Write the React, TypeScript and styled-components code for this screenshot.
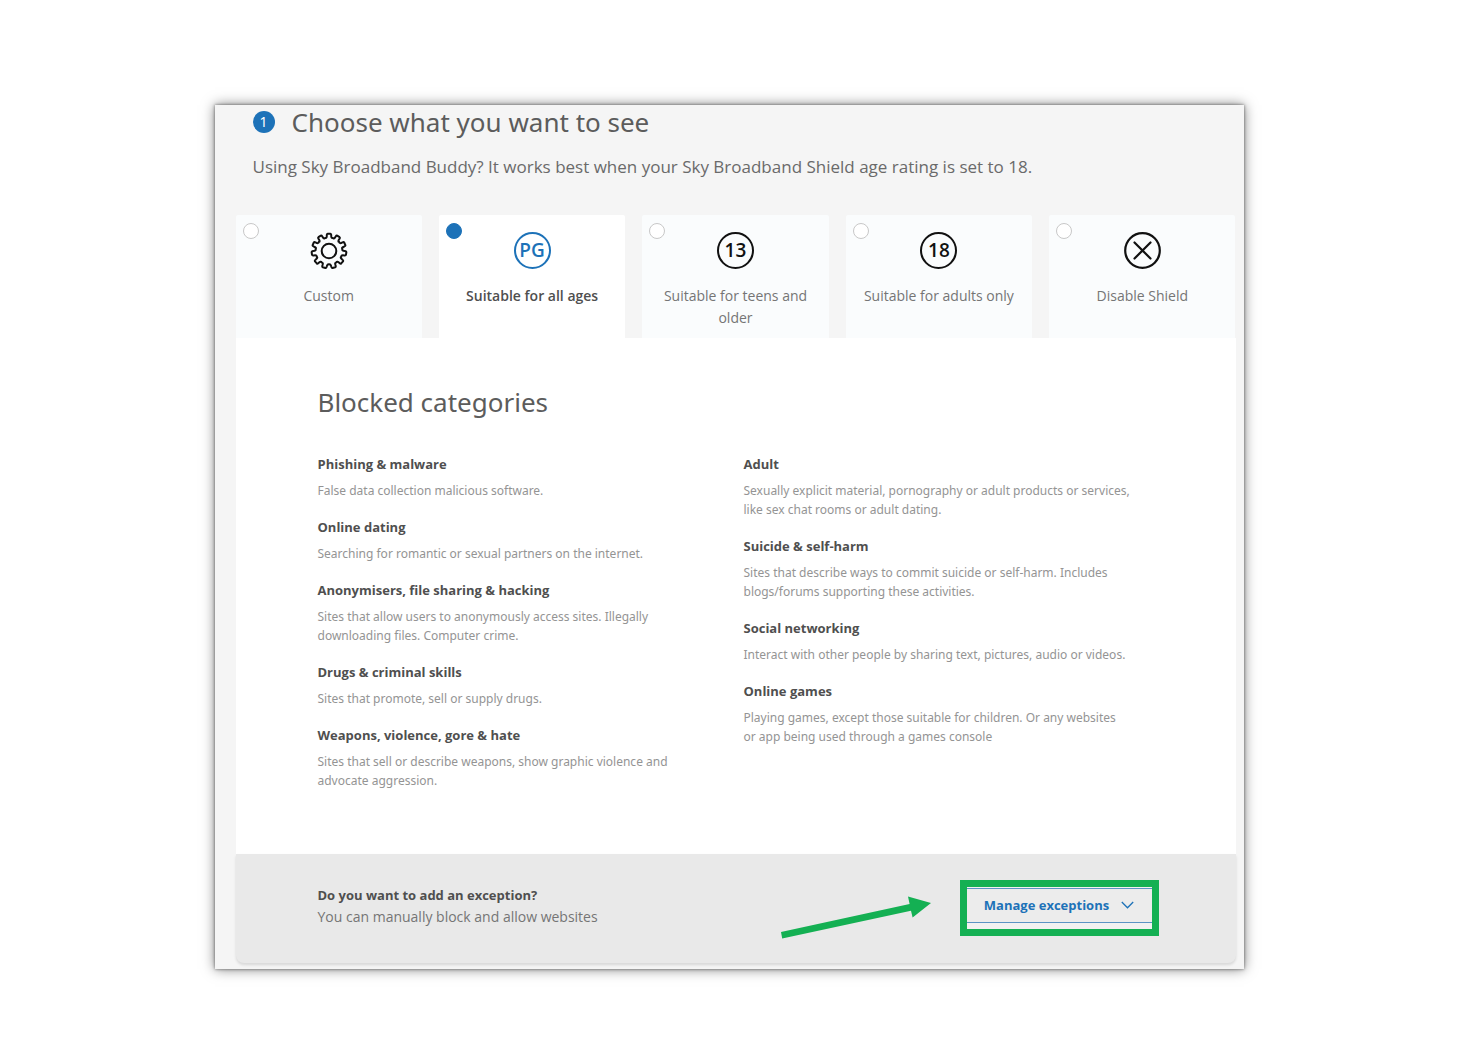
import React, { useState } from 'react';
import styled, { createGlobalStyle } from 'styled-components';

const GlobalStyle = createGlobalStyle`
  *, *::before, *::after { box-sizing: border-box; }
  body {
    margin: 0;
    background: #ffffff;
    color: #4f4f4f;
    font-family: "Open Sans", "Noto Sans", sans-serif;
  }
  h1, h2, h3, p, fieldset { margin: 0; padding: 0; border: 0; }
`;

const Page = styled.div`
  padding: 105px 24px 72px;
`;

const Frame = styled.main`
  max-width: 1029px;
  margin: 0 auto;
  padding: 0 8px 6px 21px;
  background: #f5f5f5;
  box-shadow: 0 0 3px rgba(0, 0, 0, 0.5), 0 0 12px rgba(0, 0, 0, 0.5);
`;

const Intro = styled.header`
  padding: 0 17px 36px;
`;

const StepTitle = styled.h1`
  display: flex;
  align-items: center;
  gap: 17px;
  font-family: "Noto Sans", "Open Sans", sans-serif;
  font-size: 26px;
  font-weight: 400;
  line-height: 34px;
  color: #5c5c5c;
`;

const StepNumber = styled.span`
  width: 22px;
  height: 22px;
  border-radius: 50%;
  background: #1d72b8;
  color: #ffffff;
  font-size: 14px;
  line-height: 22px;
  text-align: center;
`;

const Lead = styled.p`
  padding-top: 16px;
  font-size: 17px;
  line-height: 24px;
  color: #6a6a6a;
`;

const Ratings = styled.fieldset`
  display: grid;
  grid-template-columns: repeat(5, minmax(0, 1fr));
  gap: 17px;
`;

const Rating = styled.label<{ $active: boolean }>`
  display: grid;
  grid-template-rows: 54px 1fr;
  justify-items: center;
  row-gap: 16px;
  height: 123px;
  padding: 0 7px;
  border-radius: 2px 2px 0 0;
  background: ${p => (p.$active ? '#ffffff' : '#fafcfd')};
  color: ${p => (p.$active ? '#4f4f4f' : '#757575')};
  font-size: 14px;
  font-weight: ${p => (p.$active ? 600 : 400)};
  line-height: 22px;
  text-align: center;
  cursor: pointer;
`;

const Radio = styled.input`
  grid-area: 1 / 1;
  justify-self: start;
  appearance: none;
  width: 16px;
  height: 16px;
  margin: 8px 0 0;
  border: 1px solid #c8c8c8;
  border-radius: 50%;
  background: #ffffff;

  &:checked {
    border-color: #1d72b8;
    background: #1d72b8;
  }
`;

const Emblem = styled.span<{ $active: boolean }>`
  grid-area: 1 / 1;
  align-self: end;
  display: grid;
  place-items: center;
  width: 37px;
  height: 37px;
  color: ${p => (p.$active ? '#1d72b8' : '#111111')};
`;

const AgeMark = styled.span`
  width: 37px;
  height: 37px;
  border: 2px solid currentColor;
  border-radius: 50%;
  font-size: 19px;
  font-weight: 600;
  line-height: 33px;
`;

const Panel = styled.section`
  padding: 47px 102px 48px 82px;
  background: #ffffff;
`;

const PanelTitle = styled.h2`
  font-family: "Noto Sans", "Open Sans", sans-serif;
  font-size: 26px;
  font-weight: 400;
  line-height: 34px;
  color: #5c5c5c;
`;

const Columns = styled.div`
  display: grid;
  grid-template-columns: repeat(2, minmax(0, 1fr));
  gap: 36px;
  padding-top: 34px;
`;

const CategoryTitle = styled.h3`
  font-size: 13px;
  font-weight: 700;
  line-height: 22px;
`;

const CategoryText = styled.p`
  padding: 6px 0 16px;
  font-family: "Noto Sans", "Open Sans", sans-serif;
  font-size: 12px;
  line-height: 19px;
  color: #949494;
`;

const Footer = styled.footer`
  display: flex;
  justify-content: space-between;
  align-items: center;
  height: 109px;
  padding: 0 77px 2px 82px;
  border-radius: 0 0 8px 8px;
  background: #e9e9e9;
  box-shadow: 0 2px 3px rgba(0, 0, 0, 0.12);
`;

const Question = styled.h2`
  font-size: 13px;
  font-weight: 700;
  line-height: 22px;
`;

const Hint = styled.p`
  padding-bottom: 4px;
  font-size: 14px;
  line-height: 22px;
  color: #757575;
`;

const Highlight = styled.div`
  position: relative;
  width: 199px;
  padding: 1px 0 6px;
  border: 7px solid #14b053;
  background: #f1f1f1;
`;

const Pointer = styled.svg`
  position: absolute;
  right: 221px;
  top: 9px;
  width: 150px;
  height: 44px;
`;

const ManageButton = styled.button`
  display: flex;
  justify-content: center;
  align-items: center;
  gap: 12px;
  width: 100%;
  height: 35px;
  padding: 0;
  border: solid #5b93c4;
  border-width: 1px 0;
  background: #ececec;
  color: #1d72b8;
  font: 700 13px/22px "Open Sans", "Noto Sans", sans-serif;
  cursor: pointer;
`;

function gearPath(teeth: number) {
  const step = (Math.PI * 2) / teeth;
  const at = (radius: number, angle: number) =>
    `${(19 + radius * Math.sin(angle)).toFixed(2)} ${(19 - radius * Math.cos(angle)).toFixed(2)}`;
  let d = `M${at(17.4, -0.08)}`;
  for (let i = 0; i < teeth; i += 1) {
    const a = i * step;
    d += `L${at(17.4, a + 0.08)}Q${at(17.4, a + 0.13)} ${at(16, a + 0.14)}`;
    d += `Q${at(12.6, a + 0.16)} ${at(13.6, a + step / 2)}`;
    d += `Q${at(12.6, a + step - 0.16)} ${at(16, a + step - 0.14)}`;
    d += `Q${at(17.4, a + step - 0.13)} ${at(17.4, a + step - 0.08)}`;
  }
  return `${d}Z`;
}

const Gear = () => (
  <svg width="38" height="38" viewBox="0 0 38 38" fill="none" stroke="currentColor" strokeWidth="2" strokeLinejoin="round" aria-hidden="true">
    <path d={gearPath(11)} />
    <circle cx="19" cy="19" r="7.3" />
  </svg>
);

const Cross = () => (
  <svg width="37" height="37" viewBox="0 0 37 37" fill="none" stroke="currentColor" strokeWidth="2.2" strokeLinecap="round" aria-hidden="true">
    <circle cx="18.5" cy="18.5" r="17.3" />
    <path d="M10.5 10.5l16 16M26.5 10.5l-16 16" />
  </svg>
);

const ratings: { id: string; label: string; icon: React.ReactNode }[] = [
  { id: 'custom', label: 'Custom', icon: <Gear /> },
  { id: 'pg', label: 'Suitable for all ages', icon: <AgeMark>PG</AgeMark> },
  { id: '13', label: 'Suitable for teens and older', icon: <AgeMark>13</AgeMark> },
  { id: '18', label: 'Suitable for adults only', icon: <AgeMark>18</AgeMark> },
  { id: 'off', label: 'Disable Shield', icon: <Cross /> },
];

const categories: [string, string][][] = [
  [
    ['Phishing & malware', 'False data collection malicious software.'],
    ['Online dating', 'Searching for romantic or sexual partners on the internet.'],
    ['Anonymisers, file sharing & hacking', 'Sites that allow users to anonymously access sites. Illegally downloading files. Computer crime.'],
    ['Drugs & criminal skills', 'Sites that promote, sell or supply drugs.'],
    ['Weapons, violence, gore & hate', 'Sites that sell or describe weapons, show graphic violence and advocate aggression.'],
  ],
  [
    ['Adult', 'Sexually explicit material, pornography or adult products or services, like sex chat rooms or adult dating.'],
    ['Suicide & self-harm', 'Sites that describe ways to commit suicide or self-harm. Includes blogs/forums supporting these activities.'],
    ['Social networking', 'Interact with other people by sharing text, pictures, audio or videos.'],
    ['Online games', 'Playing games, except those suitable for children. Or any websites or\u00a0app being used through a games console'],
  ],
];

export default function App() {
  const [rating, setRating] = useState('pg');

  return (
    <Page>
      <GlobalStyle />
      <Frame>
        <Intro>
          <StepTitle>
            <StepNumber>1</StepNumber>
            Choose what you want to see
          </StepTitle>
          <Lead>
            Using Sky Broadband Buddy? It works best when your Sky Broadband Shield age rating is set to 18.
          </Lead>
        </Intro>

        <Ratings aria-label="Age rating">
          {ratings.map(({ id, label, icon }) => (
            <Rating key={id} htmlFor={`rating-${id}`} $active={rating === id}>
              <Radio
                id={`rating-${id}`}
                type="radio"
                name="rating"
                checked={rating === id}
                onChange={() => setRating(id)}
              />
              <Emblem $active={rating === id}>{icon}</Emblem>
              <span>{label}</span>
            </Rating>
          ))}
        </Ratings>

        <Panel>
          <PanelTitle>Blocked categories</PanelTitle>
          <Columns>
            {categories.map((column, index) => (
              <div key={index}>
                {column.map(([title, text]) => (
                  <article key={title}>
                    <CategoryTitle>{title}</CategoryTitle>
                    <CategoryText>{text}</CategoryText>
                  </article>
                ))}
              </div>
            ))}
          </Columns>
        </Panel>

        <Footer>
          <div>
            <Question>Do you want to add an exception?</Question>
            <Hint>You can manually block and allow websites</Hint>
          </div>
          <Highlight>
            <Pointer viewBox="0 0 150 44" fill="#14b053" aria-hidden="true">
              <path d="M1.2 42.6L0 36L128.6 8L127 .5L150 7L131.6 21.5L130 14.8Z" />
            </Pointer>
            <ManageButton type="button">
              Manage exceptions
              <svg width="13" height="8" viewBox="0 0 13 8" fill="none" stroke="currentColor" strokeWidth="1.3" aria-hidden="true">
                <path d="M.8 1l5.7 5.8L12.2 1" />
              </svg>
            </ManageButton>
          </Highlight>
        </Footer>
      </Frame>
    </Page>
  );
}
